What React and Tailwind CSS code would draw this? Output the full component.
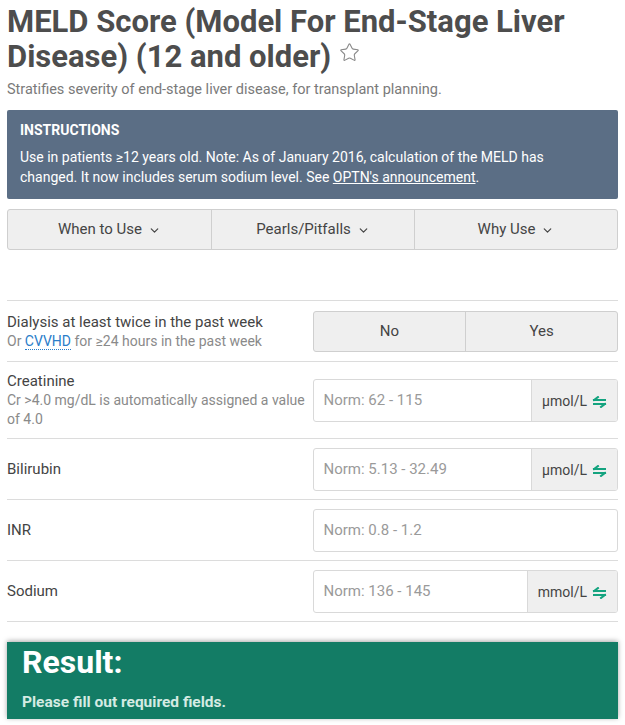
import React from 'react';
import { ChevronDown, Star } from 'lucide-react';

const Harpoons = () => (
  <svg width="15" height="12" viewBox="0 0 15 12" fill="none" stroke="#14a37f" strokeWidth="2" strokeLinecap="square">
    <path d="M2 4 H13 M2 4 L6 1" />
    <path d="M2 8 H13 M13 8 L9 11" />
  </svg>
);

const Row = ({ children, label, sub, tall }) => (
  <div className={`grid grid-cols-2 items-center border-b border-[#dcdcdc] py-[8px] ${tall ? 'min-h-[77px]' : 'min-h-[61px]'}`}>
    <div className="pr-[6px]">
      <div className="text-[15px] text-[#444] leading-[20px]">{label}</div>
      {sub && <div className="text-[14px] text-[#8a8a8a] leading-[19px]">{sub}</div>}
    </div>
    <div>{children}</div>
  </div>
);

const NumInput = ({ placeholder, unit }) => (
  <div className="flex h-[43px] border border-[#d9d9d9] rounded-[3px] bg-white overflow-hidden">
    <input
      className="flex-1 min-w-0 px-[10px] text-[15px] text-[#333] placeholder:text-[#9a9a9a] outline-none"
      placeholder={placeholder}
    />
    {unit && (
      <div className="flex items-center gap-[5px] px-[10px] pt-[3px] bg-[#efefef] border-l border-[#d9d9d9] text-[14px] text-[#444]">
        {unit}
        <Harpoons />
      </div>
    )}
  </div>
);

export default function App() {
  return (
    <div className="bg-white px-[7px] pt-[4px] pb-4 text-[#444]" style={{ fontFamily: 'Roboto, "Liberation Sans", sans-serif' }}>
      <h1 className="text-[31px] font-bold leading-[35px] text-[#4d4d4d]">
        MELD Score (Model For End-Stage Liver Disease) (12 and older){' '}
        <Star className="inline-block w-[21px] h-[21px] -mt-[12px] text-[#8a8a8a]" strokeWidth={1.25} />
      </h1>
      <p className="mt-[7px] text-[14.5px] text-[#7a7a7a] leading-[18px]">
        Stratifies severity of end-stage liver disease, for transplant planning.
      </p>

      <div className="mt-[11px] bg-[#5b6e85] rounded-[2px] px-[13px] pt-[11px] pb-[12px] text-white">
        <div className="text-[14px] font-bold leading-[18px]">INSTRUCTIONS</div>
        <p className="mt-[8px] pr-[30px] text-[14px] leading-[20px]">
          Use in patients ≥12 years old. Note: As of January 2016, calculation of the MELD has changed. It now includes serum
          sodium level. See <span className="underline">OPTN's announcement</span>.
        </p>
      </div>

      <div className="mt-[10px] grid grid-cols-3 h-[41px] bg-[#efefef] border border-[#cfcfcf] rounded-[3px] text-[15px] text-[#444]">
        {['When to Use', 'Pearls/Pitfalls', 'Why Use'].map((t, i) => (
          <div key={t} className={`flex items-center justify-center gap-[6px] ${i > 0 ? 'border-l border-[#cfcfcf]' : ''}`}>
            {t}
            <ChevronDown className="w-[13px] h-[13px] mt-[2px]" strokeWidth={2.25} />
          </div>
        ))}
      </div>

      <div className="mt-[50px] border-t border-[#dcdcdc]">
        <Row
          label="Dialysis at least twice in the past week"
          sub={
            <>
              Or <span className="text-[#2a7dc9] border-b border-dotted border-[#2a7dc9]">CVVHD</span> for ≥24 hours in the past week
            </>
          }
        >
          <div className="grid grid-cols-2 h-[41px] bg-[#efefef] border border-[#cfcfcf] rounded-[3px] text-[15px] text-[#444]">
            <div className="flex items-center justify-center">No</div>
            <div className="flex items-center justify-center border-l border-[#cfcfcf]">Yes</div>
          </div>
        </Row>
        <Row tall label="Creatinine" sub="Cr >4.0 mg/dL is automatically assigned a value of 4.0">
          <NumInput placeholder="Norm: 62 - 115" unit="µmol/L" />
        </Row>
        <Row label="Bilirubin">
          <NumInput placeholder="Norm: 5.13 - 32.49" unit="µmol/L" />
        </Row>
        <Row label="INR">
          <NumInput placeholder="Norm: 0.8 - 1.2" />
        </Row>
        <Row label="Sodium">
          <NumInput placeholder="Norm: 136 - 145" unit="mmol/L" />
        </Row>
      </div>

      <div className="mt-[20px] bg-[#137c65] px-[15px] pt-[4px] pb-[7px] shadow-[0_-1px_5px_rgba(0,0,0,0.35)]">
        <div className="text-[32px] font-bold text-white leading-[32px]">Result:</div>
        <div className="mt-[14px] text-[15.5px] font-bold text-[#d5ebe3] leading-[20px]">Please fill out required fields.</div>
      </div>
    </div>
  );
}
